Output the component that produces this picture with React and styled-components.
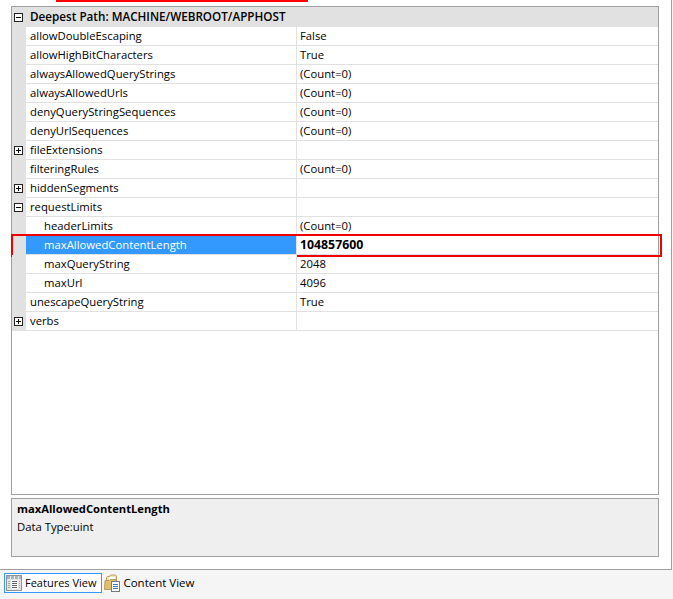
import React from 'react'
import styled, { createGlobalStyle } from 'styled-components'

const GlobalStyle = createGlobalStyle`
  html, body {
    margin: 0;
    padding: 0;
    background: #f5f5f5;
  }
  body {
    font-family: "Open Sans", "Liberation Sans", sans-serif;
    font-size: 11.3px;
    color: #000;
  }
`

const ROWS = [
  { name: 'allowDoubleEscaping', value: 'False' },
  { name: 'allowHighBitCharacters', value: 'True' },
  { name: 'alwaysAllowedQueryStrings', value: '(Count=0)' },
  { name: 'alwaysAllowedUrls', value: '(Count=0)' },
  { name: 'denyQueryStringSequences', value: '(Count=0)' },
  { name: 'denyUrlSequences', value: '(Count=0)' },
  { name: 'fileExtensions', value: '', toggle: 'plus' },
  { name: 'filteringRules', value: '(Count=0)' },
  { name: 'hiddenSegments', value: '', toggle: 'plus' },
  { name: 'requestLimits', value: '', toggle: 'minus' },
  { name: 'headerLimits', value: '(Count=0)', child: true },
  { name: 'maxAllowedContentLength', value: '104857600', child: true, selected: true },
  { name: 'maxQueryString', value: '2048', child: true },
  { name: 'maxUrl', value: '4096', child: true },
  { name: 'unescapeQueryString', value: 'True' },
  { name: 'verbs', value: '', toggle: 'plus' },
]

const Toggle = ({ type }) => (
  <svg width="9" height="9" viewBox="0 0 9 9">
    <rect x="0.5" y="0.5" width="8" height="8" fill="#fff" stroke="#222" />
    <path d="M2 4.5h5" stroke="#000" />
    {type === 'plus' && <path d="M4.5 2v5" stroke="#000" />}
  </svg>
)

const FeaturesIcon = () => (
  <svg width="16" height="16" viewBox="0 0 16 16">
    <rect x="0.5" y="0.5" width="15" height="15" fill="#e4e4e4" stroke="#8b939b" />
    <rect x="1" y="1" width="14" height="3" fill="#aab4be" />
    <path d="M4.5 1v3M8.5 1v3M12.5 1v3" stroke="#e8ecef" />
    <rect x="5" y="5" width="7" height="9" fill="#fff" />
    <path d="M2 6.5h2M2 8.5h2M2 10.5h2M2 12.5h2M13 6.5h1M13 8.5h1M13 10.5h1M13 12.5h1" stroke="#a8a8a8" />
    <path d="M6 6.5h5M6 8.5h5M6 10.5h5M6 12.5h5" stroke="#5d6670" />
  </svg>
)

const ContentIcon = () => (
  <svg width="16" height="18" viewBox="0 0 16 18">
    <path d="M2.5 13V3.5l1-1h2l1-1.5h5l1 1v6z" fill="#f3e2ae" stroke="#a98c4f" strokeWidth="0.8" />
    <path d="M5 3h6v5H5z" fill="#fff" />
    <path d="M0.5 15.5L1 6.5h4l1-1h6v10z" fill="#e2bf6a" stroke="#a98c4f" strokeWidth="0.8" />
    <rect x="7.5" y="7.5" width="8" height="10" fill="#fff" stroke="#6f7c8a" />
    <path d="M9 10.5h5M9 12.5h5M9 14.5h5" stroke="#3f78b8" />
  </svg>
)

const App = () => (
  <>
    <GlobalStyle />
    <Page>
      <TopMark />
      <Panel>
        <Grid>
          <Header>
            <Gutter>
              <Toggle type="minus" />
            </Gutter>
            <HeaderTitle>Deepest Path: MACHINE/WEBROOT/APPHOST</HeaderTitle>
          </Header>
          {ROWS.map((row) => (
            <Row key={row.name}>
              <Gutter>{row.toggle && <Toggle type={row.toggle} />}</Gutter>
              <NameCell $child={row.child} $selected={row.selected}>
                {row.name}
              </NameCell>
              <ValueCell $selected={row.selected}>{row.value}</ValueCell>
              {row.selected && <Highlight />}
            </Row>
          ))}
        </Grid>
        <Description>
          <DescriptionTitle>maxAllowedContentLength</DescriptionTitle>
          <div>Data Type:uint</div>
        </Description>
      </Panel>
      <Footer>
        <ViewTab $active>
          <FeaturesIcon />
          Features View
        </ViewTab>
        <ViewTab>
          <ContentIcon />
          Content View
        </ViewTab>
      </Footer>
    </Page>
  </>
)

const Page = styled.div`
  position: relative;
  width: 673px;
  height: 599px;
  overflow: hidden;
  background: #f5f5f5;
`

const TopMark = styled.div`
  position: absolute;
  top: 0;
  left: 56px;
  width: 252px;
  height: 2px;
  background: #ff0000;
`

const Panel = styled.div`
  box-sizing: border-box;
  display: flex;
  flex-direction: column;
  gap: 3px;
  width: 672px;
  height: 570px;
  padding: 6px 12px 12px 11px;
  background: #fff;
  border-right: 1px solid #a0a0a0;
  border-bottom: 1px solid #a0a0a0;
`

const Grid = styled.div`
  box-sizing: border-box;
  flex: 1 1;
  border: 1px solid #a0a0a0;
  background: #fff;
`

const Header = styled.div`
  display: flex;
  height: 20px;
  background: #e1e1e1;
`

const HeaderTitle = styled.div`
  display: flex;
  align-items: center;
  padding: 0 0 2px 4px;
  font-size: 11.7px;
  font-weight: 600;
  white-space: nowrap;
`

const Row = styled.div`
  position: relative;
  display: flex;
  height: 19px;
`

const Gutter = styled.div`
  flex: none;
  display: flex;
  align-items: center;
  justify-content: center;
  box-sizing: border-box;
  width: 14px;
  padding-right: 1px;
  background: #e1e1e1;
`

const NameCell = styled.div`
  box-sizing: border-box;
  flex: none;
  display: flex;
  align-items: center;
  width: 271px;
  height: 19px;
  padding-left: ${(props) => (props.$child ? '18px' : '4px')};
  padding-bottom: 2px;
  border-bottom: 1px solid #e1e1e1;
  border-right: 1px solid #e1e1e1;
  white-space: nowrap;
  background: ${(props) => (props.$selected ? '#3399ff' : '#fff')};
  color: ${(props) => (props.$selected ? '#fff' : '#000')};
`

const ValueCell = styled.div`
  box-sizing: border-box;
  flex: 1 1;
  display: flex;
  align-items: center;
  height: 19px;
  padding-left: 3px;
  padding-bottom: 2px;
  border-bottom: 1px solid #e1e1e1;
  font-weight: ${(props) => (props.$selected ? 700 : 400)};
  font-size: ${(props) => (props.$selected ? '12.3px' : '11.3px')};
`

const Highlight = styled.div`
  position: absolute;
  top: -2px;
  left: -1px;
  right: -4px;
  height: 23px;
  box-sizing: border-box;
  border: 2px solid #f00000;
  pointer-events: none;
`

const Description = styled.div`
  box-sizing: border-box;
  flex: none;
  height: 59px;
  padding: 1px 5px;
  line-height: 18px;
  background: #efefef;
  border: 1px solid #a0a0a0;
`

const DescriptionTitle = styled.div`
  font-weight: 700;
  font-size: 11.2px;
`

const Footer = styled.div`
  display: flex;
  align-items: flex-start;
  height: 26px;
  padding: 3px 0 0 4px;
`

const ViewTab = styled.div`
  box-sizing: border-box;
  display: flex;
  align-items: center;
  gap: 3px;
  height: 20px;
  padding: 0 5px 1px 1px;
  font-size: ${(props) => (props.$active ? '11px' : '11.5px')};
  border: 1px solid ${(props) => (props.$active ? '#3399ff' : 'transparent')};
  background: ${(props) => (props.$active ? '#fff' : 'transparent')};
  white-space: nowrap;
`

export default App
